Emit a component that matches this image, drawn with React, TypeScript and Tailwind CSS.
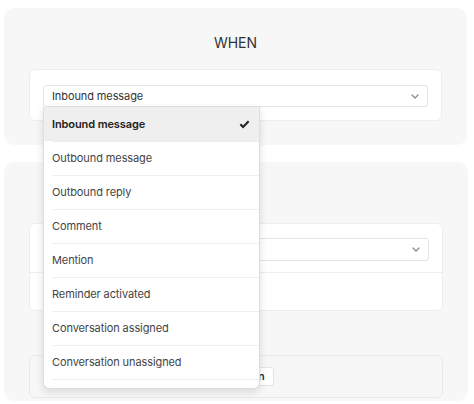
const font = "font-['Inter','Noto_Sans',sans-serif]";

const options = [
  "Inbound message",
  "Outbound message",
  "Outbound reply",
  "Comment",
  "Mention",
  "Reminder activated",
  "Conversation assigned",
  "Conversation unassigned",
];

function Chevron() {
  return (
    <svg width="8" height="5" viewBox="0 0 8 5" fill="none" aria-hidden>
      <path d="M1 1l3 3 3-3" stroke="#8a8a8a" strokeWidth="1.3" strokeLinecap="round" strokeLinejoin="round" />
    </svg>
  );
}

function Check() {
  return (
    <svg width="11" height="9" viewBox="0 0 11 9" aria-hidden>
      <path d="M0.6 4.9 2.1 3.4 4.1 5.4 8.9 0.6 10.4 2.1 4.1 8.4z" fill="#222" />
    </svg>
  );
}

function Select({ value, height }: { value?: string; height: string }) {
  return (
    <div className={`flex ${height} items-center justify-between rounded-[3px] border border-[#e4e4e4] bg-white pl-2 pr-[8px]`}>
      <span className="text-[11px] tracking-[-0.1px] text-[#333]">{value}</span>
      <Chevron />
    </div>
  );
}

function Heading({ children }: { children: string }) {
  return <h2 className="mb-[17px] text-center text-[14px] leading-[18px] text-[#333]">{children}</h2>;
}

export default function App() {
  return (
    <div className={`relative h-[404px] w-[474px] overflow-hidden bg-white px-1 pt-2 ${font}`}>
      <section className="mr-[3px] rounded-[10px] bg-[#f7f7f7] px-[25px] pb-6 pt-[26px]">
        <Heading>WHEN</Heading>
        <div className="rounded-md border border-[#eeeeee] bg-white px-[13px] pb-[13px] pt-[15px]">
          <Select value="Inbound message" height="h-[22px]" />
        </div>
      </section>

      <section className="mr-[2px] mt-[17px] rounded-[10px] bg-[#f7f7f7] px-[25px] pb-[3px] pt-[26px]">
        <Heading>IF</Heading>
        <div className="rounded-md border border-[#eeeeee] bg-white">
          <div className="px-[13px] pb-[11px] pt-[14px]">
            <Select height="h-[23px]" />
          </div>
          <div className="h-[38px] border-t border-[#eeeeee]" />
        </div>
        <div className="mt-[44px] flex justify-center rounded-md border border-[#e9e9e9] bg-[#f7f7f7] py-[11px]">
          <button className="h-[19px] rounded-[3px] border border-[#e4e4e4] bg-white px-2 text-[11px] font-semibold text-[#333]">
            Add action
          </button>
        </div>
      </section>

      {/* open option list of the WHEN select */}
      <div className="absolute left-[43px] top-[107px] h-[282px] w-[217px] overflow-hidden rounded-b-[6px] border border-t-0 border-[#dedede] bg-white shadow-[0_3px_8px_rgba(0,0,0,0.12)]">
        {options.map((label, i) =>
          i === 0 ? (
            <div key={label} className="flex h-[34px] items-center justify-between bg-[#efefef] pl-[8px] pr-[9px]">
              <span className="text-[11px] font-semibold tracking-[-0.1px] text-[#222]">{label}</span>
              <Check />
            </div>
          ) : (
            <div key={label} className="ml-[8px] flex h-[34px] items-center border-t border-[#eeeeee]">
              <span className="text-[11px] tracking-[-0.1px] text-[#444]">{label}</span>
            </div>
          ),
        )}
        <div className="ml-[8px] border-t border-[#eeeeee]" />
      </div>
    </div>
  );
}
